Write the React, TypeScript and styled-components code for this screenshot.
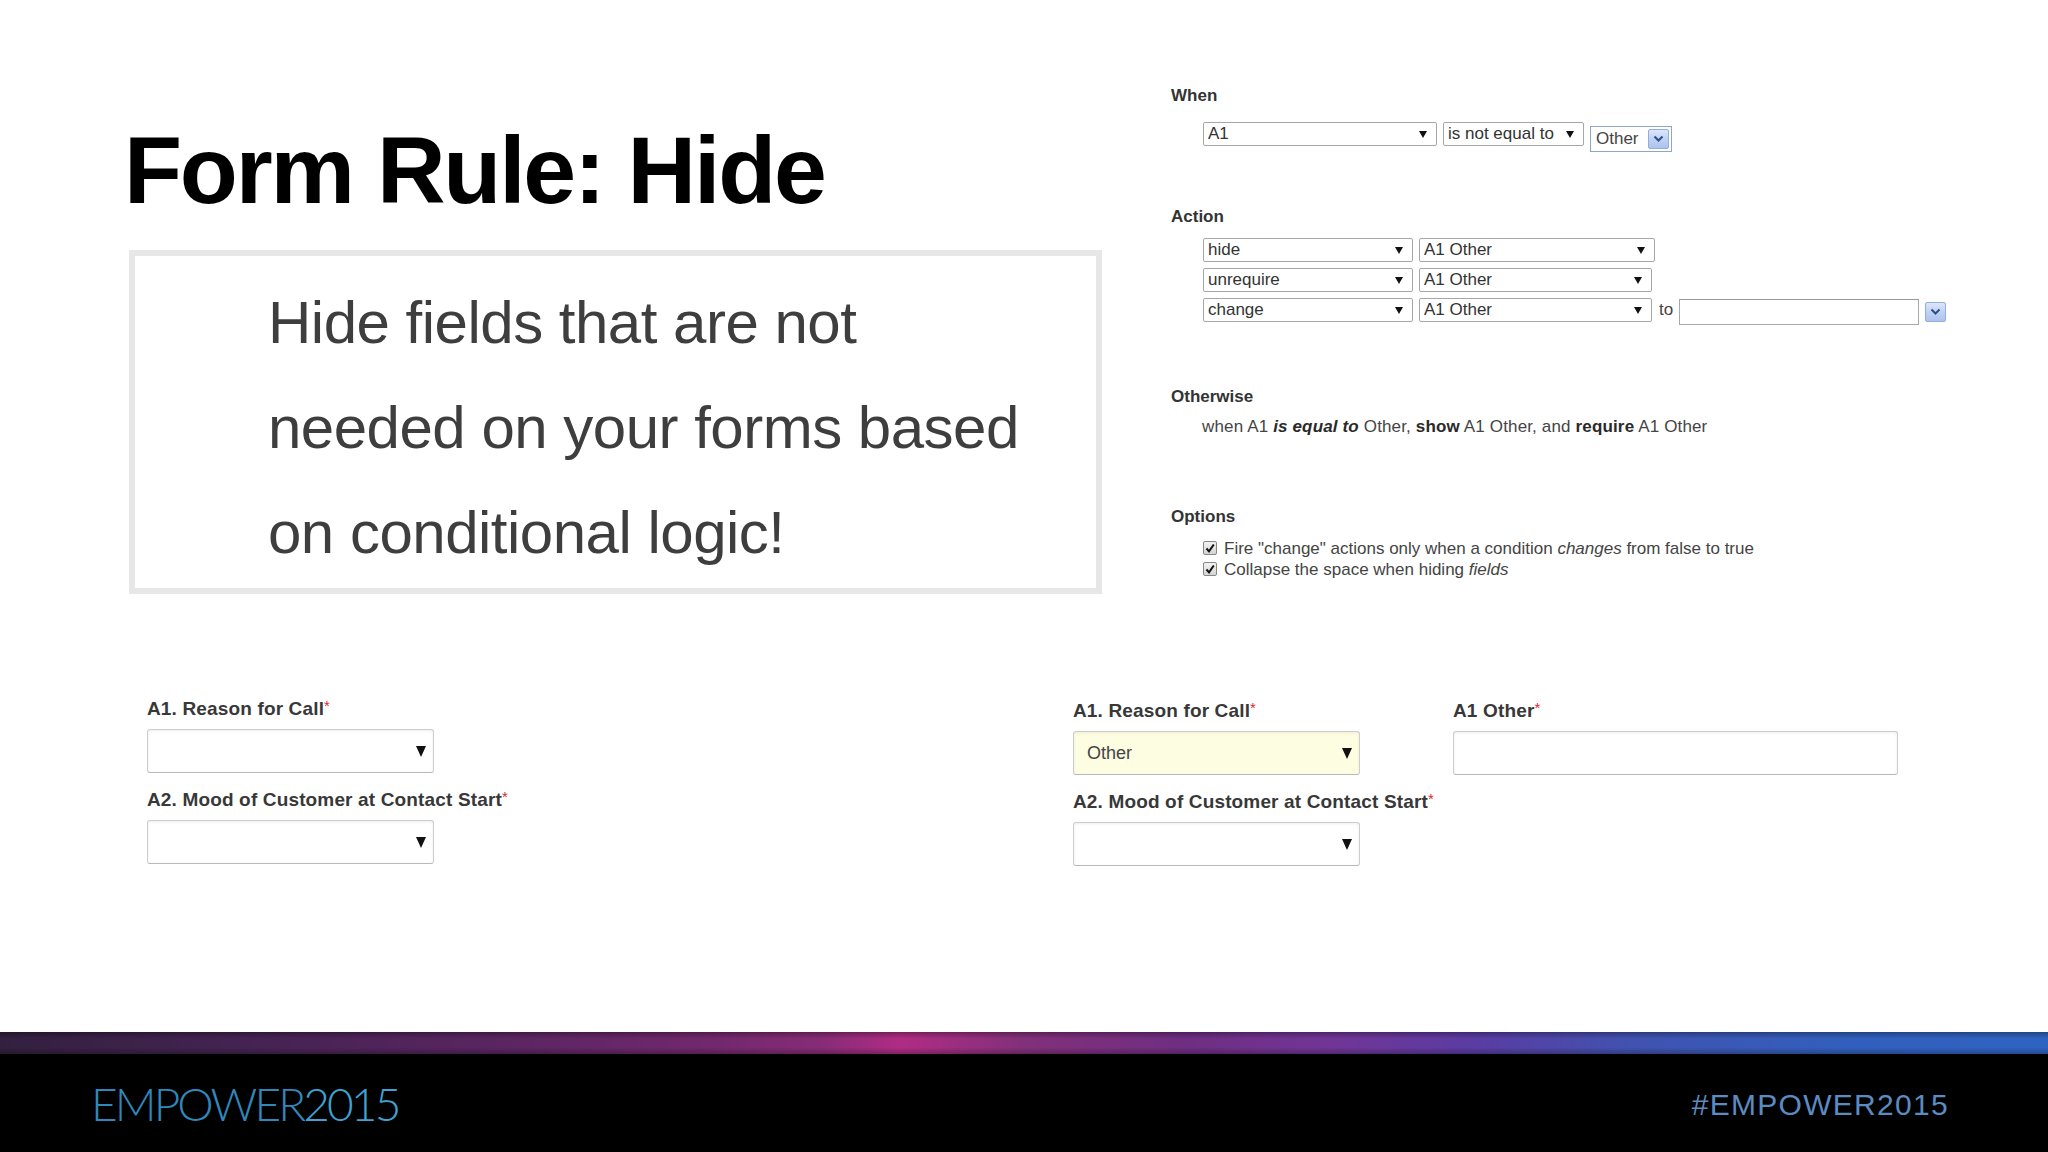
import React from "react";
import styled, { createGlobalStyle } from "styled-components";

const GlobalStyle = createGlobalStyle`
  html, body {
    margin: 0;
    padding: 0;
    background: #ffffff;
  }
  body {
    font-family: "Liberation Sans", Arial, sans-serif;
  }
`;

const Slide = styled.div`
  width: 2048px;
  height: 1152px;
  display: flex;
  flex-direction: column;
  overflow: hidden;
  background: #ffffff;
`;

const Content = styled.main`
  flex: 1;
  display: flex;
  flex-direction: column;
`;

const TopSection = styled.section`
  display: flex;
  align-items: flex-start;
`;

const LeftColumn = styled.div`
  padding: 123px 0 0 129px;
  width: 973px;
`;

const Title = styled.h1`
  margin: 0 0 0 -5px;
  font-size: 95px;
  line-height: 95px;
  font-weight: 700;
  letter-spacing: -2.2px;
  color: #000;
`;

const SummaryBox = styled.div`
  box-sizing: border-box;
  margin-top: 32px;
  width: 973px;
  border: 6px solid #e7e7e7;
  padding: 14px 0 3px 133px;
  font-size: 60px;
  line-height: 105px;
  letter-spacing: -0.5px;
  color: #3e3e3e;
`;

/* ---------- rule editor ---------- */

const RulePanel = styled.div`
  padding: 86px 0 0 69px;
  font-size: 17px;
  color: #333;
`;

const SectionLabel = styled.div<{ $gap: number }>`
  margin-top: ${(p) => p.$gap}px;
  font-weight: 700;
  line-height: 20px;
  color: #333;
`;

const RuleRow = styled.div<{ $gap: number }>`
  display: flex;
  align-items: flex-start;
  gap: 6px;
  margin: ${(p) => p.$gap}px 0 0 32px;
`;

const RuleRows = styled.div`
  display: flex;
  flex-direction: column;
  gap: 6px;
`;

const RuleSelect = styled.div<{ $w: number }>`
  box-sizing: border-box;
  width: ${(p) => p.$w}px;
  height: 24px;
  border: 1px solid #a7a7a7;
  border-radius: 2px;
  background: #fff;
  display: flex;
  align-items: center;
  justify-content: space-between;
  padding: 0 9px 0 4px;
  line-height: 22px;
  color: #333;
  white-space: nowrap;
`;

const ComboBox = styled.div<{ $w: number; $top: number }>`
  box-sizing: border-box;
  width: ${(p) => p.$w}px;
  height: 26px;
  margin-top: ${(p) => p.$top}px;
  border: 1px solid #8fa7c4;
  background: #fff;
  display: flex;
  align-items: center;
  justify-content: space-between;
  padding: 0 2px 0 5px;
  color: #444;
`;

const DropButton = styled.span<{ $top?: number }>`
  box-sizing: border-box;
  width: 21px;
  height: 20px;
  margin-top: ${(p) => p.$top ?? 0}px;
  border: 1px solid #93aedb;
  border-radius: 2px;
  background: linear-gradient(180deg, #dce6fa 0%, #c0d2f4 50%, #adc3ee 100%);
  display: flex;
  align-items: center;
  justify-content: center;
  flex-shrink: 0;
`;

const ToText = styled.span`
  margin: 2px 0 0 1px;
  line-height: 20px;
  color: #444;
`;

const TextField = styled.div<{ $w: number }>`
  box-sizing: border-box;
  width: ${(p) => p.$w}px;
  height: 26px;
  margin-top: 1px;
  border: 1px solid #a9a9a9;
  border-top-color: #9a9a9a;
  background: #fff;
`;

const Sentence = styled.div`
  margin: 10px 0 0 31px;
  line-height: 20px;
  letter-spacing: 0.15px;
  color: #444;

  b {
    color: #2a2a2a;
  }
`;

const OptionList = styled.div`
  margin: 11px 0 0 32px;
  display: flex;
  flex-direction: column;
`;

const OptionLine = styled.label`
  display: flex;
  align-items: center;
  gap: 7px;
  line-height: 21px;
  color: #444;
`;

const CheckBox = styled.span`
  box-sizing: border-box;
  width: 14px;
  height: 14px;
  border: 1px solid #858686;
  border-radius: 2px;
  background: linear-gradient(180deg, #f2f2f2, #d4d4d4);
  display: flex;
  align-items: center;
  justify-content: center;
  margin-top: -2px;
`;

/* ---------- form preview ---------- */

const FormsSection = styled.section`
  display: grid;
  grid-template-columns: 926px auto;
  margin-top: 100px;
  padding-left: 147px;
`;

const FormColumn = styled.div<{ $top: number }>`
  padding-top: ${(p) => p.$top}px;
  display: flex;
  flex-direction: column;
  gap: 12px;
`;

const FieldRow = styled.div`
  display: flex;
  gap: 93px;
`;

const Field = styled.div`
  display: flex;
  flex-direction: column;
  gap: 8px;
`;

const FieldLabel = styled.div`
  font-size: 19px;
  line-height: 24px;
  font-weight: 700;
  letter-spacing: 0.15px;
  color: #383838;
  white-space: nowrap;
`;

const Required = styled.span`
  color: #e0262b;
  font-weight: 400;
  font-size: 15px;
  vertical-align: 4px;
`;

const FormSelect = styled.div<{ $w: number; $filled?: boolean }>`
  box-sizing: border-box;
  width: ${(p) => p.$w}px;
  height: 44px;
  border: 1px solid #cdcdcd;
  border-bottom-color: #b9b9b9;
  border-radius: 3px;
  background: ${(p) => (p.$filled ? "#fdfde2" : "#fff")};
  box-shadow: inset 0 1px 3px rgba(0, 0, 0, 0.07);
  display: flex;
  align-items: center;
  justify-content: space-between;
  padding: 0 7px 0 13px;
  font-size: 18px;
  color: #444;
`;

/* ---------- footer ---------- */

const Footer = styled.footer`
  display: flex;
  flex-direction: column;
`;

const GlowBar = styled.div`
  height: 22px;
  background:
    linear-gradient(180deg, rgba(0, 0, 0, 0.3) 0%, rgba(0, 0, 0, 0) 30%, rgba(0, 0, 0, 0) 70%, rgba(0, 0, 0, 0.25) 100%),
    linear-gradient(90deg, #33203f 0%, #442352 12%, #5b2562 25%, #72286d 35%, #862c76 40%, #b02c84 44%, #82307a 50%, #6e2e82 58%, #713596 65%, #5a3ca2 72%, #4053b0 80%, #325fbd 90%, #2f63c2 100%);
`;

const FooterBody = styled.div`
  height: 98px;
  background: #000;
  display: flex;
  align-items: center;
  justify-content: space-between;
  padding: 0 99px 0 91px;
`;

const Logo = styled.div`
  font-family: Lato, "Liberation Sans", sans-serif;
  font-weight: 300;
  font-size: 46px;
  letter-spacing: -2.9px;
  color: #2f88bc;

  span {
    color: #3ea3d4;
  }
`;

const HashTag = styled.div`
  font-size: 30px;
  letter-spacing: 1.3px;
  color: #5a8cc2;
  margin-top: 4px;
`;

/* ---------- icons ---------- */

const SmallArrow = () => (
  <svg width="8" height="7" viewBox="0 0 8 7" aria-hidden>
    <path d="M0 0h8L4 7z" fill="#111" />
  </svg>
);

const FormArrow = () => (
  <svg width="10" height="11" viewBox="0 0 10 11" aria-hidden>
    <path d="M0 0h10L5 11z" fill="#111" />
  </svg>
);

const Chevron = () => (
  <svg width="11" height="8" viewBox="0 0 11 8" aria-hidden>
    <path d="M1.5 1.5l4 4 4-4" stroke="#2d4e86" strokeWidth="2" fill="none" />
  </svg>
);

const Check = () => (
  <svg width="10" height="10" viewBox="0 0 10 10" aria-hidden>
    <path d="M1.5 5.5l2.5 2.8L8.8 1.5" stroke="#111" strokeWidth="2" fill="none" />
  </svg>
);

function Select({ w, children }: { w: number; children?: React.ReactNode }) {
  return (
    <RuleSelect $w={w}>
      <span>{children}</span>
      <SmallArrow />
    </RuleSelect>
  );
}

function FormField({
  label,
  width = 287,
  value,
  filled,
  input,
}: {
  label: string;
  width?: number;
  value?: string;
  filled?: boolean;
  input?: boolean;
}) {
  return (
    <Field>
      <FieldLabel>
        {label}
        <Required>*</Required>
      </FieldLabel>
      <FormSelect $w={width} $filled={filled}>
        <span>{value}</span>
        {!input && <FormArrow />}
      </FormSelect>
    </Field>
  );
}

export default function App() {
  return (
    <>
      <GlobalStyle />
      <Slide>
        <Content>
          <TopSection>
            <LeftColumn>
              <Title>Form Rule: Hide</Title>
              <SummaryBox>
                Hide fields that are not
                <br />
                needed on your forms based
                <br />
                on conditional logic!
              </SummaryBox>
            </LeftColumn>

            <RulePanel>
              <SectionLabel $gap={0}>When</SectionLabel>
              <RuleRow $gap={16}>
                <Select w={234}>A1</Select>
                <Select w={141}>is not equal to</Select>
                <ComboBox $w={82} $top={4}>
                  <span>Other</span>
                  <DropButton>
                    <Chevron />
                  </DropButton>
                </ComboBox>
              </RuleRow>

              <SectionLabel $gap={55}>Action</SectionLabel>
              <RuleRows>
                <RuleRow $gap={11}>
                  <Select w={210}>hide</Select>
                  <Select w={236}>A1 Other</Select>
                </RuleRow>
                <RuleRow $gap={0}>
                  <Select w={210}>unrequire</Select>
                  <Select w={233}>A1 Other</Select>
                </RuleRow>
                <RuleRow $gap={0}>
                  <Select w={210}>change</Select>
                  <Select w={233}>A1 Other</Select>
                  <ToText>to</ToText>
                  <TextField $w={240} />
                  <DropButton $top={4}>
                    <Chevron />
                  </DropButton>
                </RuleRow>
              </RuleRows>

              <SectionLabel $gap={62}>Otherwise</SectionLabel>
              <Sentence>
                when A1{" "}
                <b>
                  <i>is equal to</i>
                </b>{" "}
                Other, <b>show</b> A1 Other, and <b>require</b> A1 Other
              </Sentence>

              <SectionLabel $gap={70}>Options</SectionLabel>
              <OptionList>
                <OptionLine>
                  <CheckBox>
                    <Check />
                  </CheckBox>
                  <span>
                    Fire "change" actions only when a condition <i>changes</i> from false to true
                  </span>
                </OptionLine>
                <OptionLine>
                  <CheckBox>
                    <Check />
                  </CheckBox>
                  <span>
                    Collapse the space when hiding <i>fields</i>
                  </span>
                </OptionLine>
              </OptionList>
            </RulePanel>
          </TopSection>

          <FormsSection>
            <FormColumn $top={0}>
              <FormField label="A1. Reason for Call" />
              <FormField label="A2. Mood of Customer at Contact Start" />
            </FormColumn>
            <FormColumn $top={2}>
              <FieldRow>
                <FormField label="A1. Reason for Call" value="Other" filled />
                <FormField label="A1 Other" width={445} input />
              </FieldRow>
              <FormField label="A2. Mood of Customer at Contact Start" />
            </FormColumn>
          </FormsSection>
        </Content>

        <Footer>
          <GlowBar />
          <FooterBody>
            <Logo>
              EMPOWER<span>2015</span>
            </Logo>
            <HashTag>#EMPOWER2015</HashTag>
          </FooterBody>
        </Footer>
      </Slide>
    </>
  );
}
